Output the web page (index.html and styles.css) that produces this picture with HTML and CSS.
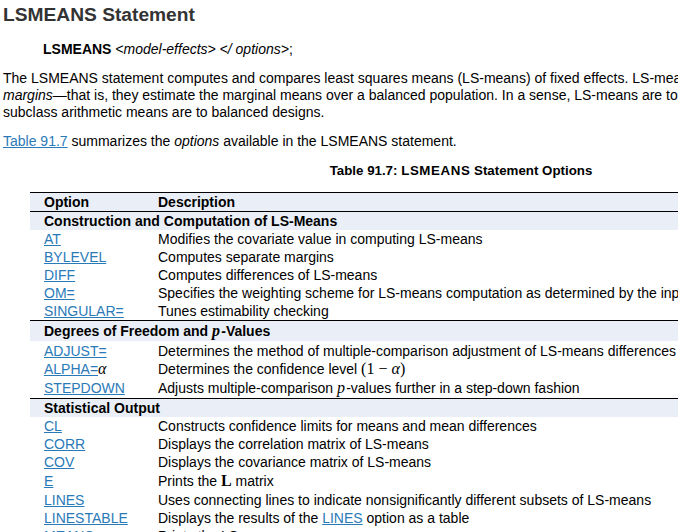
FILE: index.html
```html
<!DOCTYPE html>
<html>
<head>
<meta charset="utf-8">
<link rel="stylesheet" href="styles.css">
</head>
<body>
<div class="page">
  <h1 class="title">LSMEANS Statement</h1>
  <p class="syntax"><b>LSMEANS</b> <i>&lt;model-effects&gt; &lt;/ options&gt;</i>;</p>
  <p class="para">The LSMEANS statement computes and compares least squares means (LS-means) of fixed effects. LS-means are predicted population <i>margins</i>—that is, they estimate the marginal means over a balanced population. In a sense, LS-means are to unbalanced designs as class and subclass arithmetic means are to balanced designs.</p>
  <p class="para"><a href="#">Table 91.7</a> summarizes the <i>options</i> available in the LSMEANS statement.</p>
  <div class="tablewrap">
    <div class="caption">Table 91.7: <span class="sp">LSMEANS</span> Statement Options</div>
    <table class="opts">
      <thead>
        <tr class="head"><th class="c1">Option</th><th>Description</th></tr>
      </thead>
      <tbody>
        <tr class="grp"><td colspan="2">Construction and Computation of LS-Means</td></tr>
        <tr><td class="c1"><a href="#">AT</a></td><td>Modifies the covariate value in computing LS-means</td></tr>
        <tr><td class="c1"><a href="#">BYLEVEL</a></td><td>Computes separate margins</td></tr>
        <tr><td class="c1"><a href="#">DIFF</a></td><td>Computes differences of LS-means</td></tr>
        <tr><td class="c1"><a href="#">OM=</a></td><td>Specifies the weighting scheme for LS-means computation as determined by the input data set</td></tr>
        <tr><td class="c1"><a href="#">SINGULAR=</a></td><td>Tunes estimability checking</td></tr>
        <tr class="grp sep h20"><td colspan="2">Degrees of Freedom and <span class="m mi">p</span>&#8202;-Values</td></tr>
        <tr class="h19"><td class="c1"><a href="#">ADJUST=</a></td><td>Determines the method of multiple-comparison adjustment of LS-means differences</td></tr>
        <tr><td class="c1"><a href="#">ALPHA=</a><span class="m mi">α</span></td><td>Determines the confidence level <span class="m">(1&#8197;−&#8197;<span class="mi">α</span>)</span></td></tr>
        <tr class="h20"><td class="c1"><a href="#">STEPDOWN</a></td><td>Adjusts multiple-comparison <span class="m mi">p</span>&#8202;-values further in a step-down fashion</td></tr>
        <tr class="grp sep"><td colspan="2">Statistical Output</td></tr>
        <tr><td class="c1"><a href="#">CL</a></td><td>Constructs confidence limits for means and mean differences</td></tr>
        <tr><td class="c1"><a href="#">CORR</a></td><td>Displays the correlation matrix of LS-means</td></tr>
        <tr><td class="c1"><a href="#">COV</a></td><td>Displays the covariance matrix of LS-means</td></tr>
        <tr class="h20"><td class="c1"><a href="#">E</a></td><td>Prints the <span class="m mb">L</span> matrix</td></tr>
        <tr><td class="c1"><a href="#">LINES</a></td><td>Uses connecting lines to indicate nonsignificantly different subsets of LS-means</td></tr>
        <tr><td class="c1"><a href="#">LINESTABLE</a></td><td>Displays the results of the <a href="#">LINES</a> option as a table</td></tr>
        <tr><td class="c1"><a href="#">MEANS</a></td><td>Prints the LS-means</td></tr>
        <tr><td class="c1"><a href="#">PLOTS=</a></td><td>Requests graphs of means and mean comparisons</td></tr>
      </tbody>
    </table>
  </div>
</div>
</body>
</html>
```
FILE: styles.css
```css
html { overflow: hidden; }
body {
  margin: 0;
  font-family: "Liberation Sans", Arial, sans-serif;
  font-size: 14px;
  color: #000;
  background: #fff;
}
.page {
  width: 900px;
  padding: 0 3px;
}
.title {
  margin: 3px 0 0 0;
  font-size: 19.2px;
  line-height: 24px;
  font-weight: bold;
  color: #333;
}
.syntax {
  margin: 14px 0 0 40px;
  font-size: 14px;
  line-height: 17px;
}
.para {
  margin: 12px 0 0 0;
  line-height: 17px;
}
a { color: #2a7ab8; text-decoration: underline; }
.tablewrap {
  width: 862px;
  margin: 12px 0 0 27px;
}
.caption {
  text-align: center;
  font-weight: bold;
  font-size: 13.3px;
  line-height: 17px;
  margin-bottom: 13px;
}
.caption .sp { letter-spacing: 0.6px; }
.opts {
  width: 100%;
  border-collapse: collapse;
  border-top: 1px solid #000;
}
.opts th, .opts td {
  padding: 0 0 0 14px;
  height: 18px;
  line-height: 18px;
  text-align: left;
  white-space: nowrap;
  vertical-align: middle;
}
.opts .c1 { width: 100px; }
.opts .h19 td { height: 19px; }
.opts .h20 td { height: 20px; }
.head { background: #eaeff7; border-bottom: 1px solid #000; }
.head th { font-weight: bold; }
.grp { background: #eaeff7; font-weight: bold; }
.sep { border-top: 1px solid #000; }
.m { font-family: "Liberation Serif", "DejaVu Serif", serif; font-size: 16px; line-height: 1; }
.mi { font-style: italic; }
.mb { font-weight: bold; }
```
